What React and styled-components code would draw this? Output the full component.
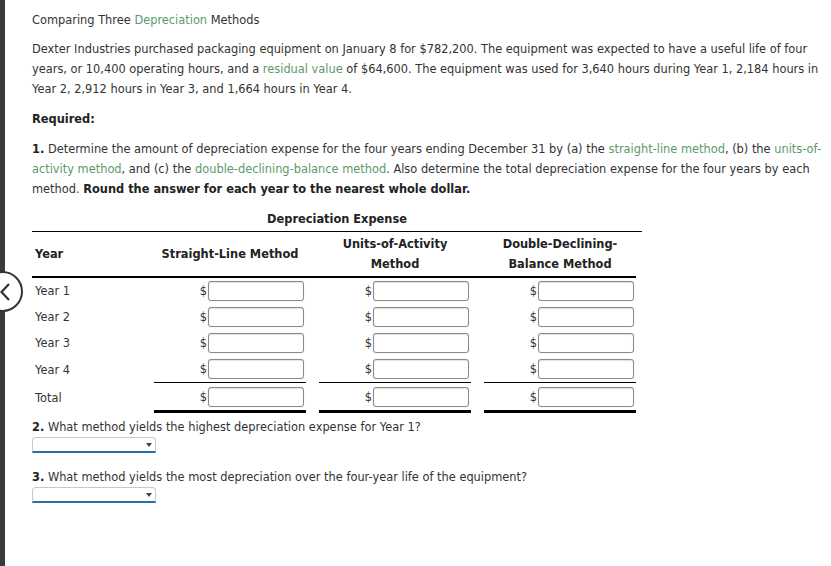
import React from 'react';
import styled, { createGlobalStyle } from 'styled-components';

const GlobalStyle = createGlobalStyle`
  body {
    margin: 0;
    background: #fff;
    font-family: "DejaVu Sans", Verdana, sans-serif;
    font-size: 11.4px;
    color: #333;
  }
`;

const Page = styled.div`
  display: flex;
  min-height: 566px;
  position: relative;
  overflow: hidden;
`;

const SideBar = styled.div`
  width: 5px;
  flex-shrink: 0;
  background: #3b3b3b;
`;

const BackButton = styled.div`
  position: absolute;
  left: -18px;
  top: 271px;
  width: 41px;
  height: 41px;
  border-radius: 50%;
  border: 2px solid #333;
  background: #fff;
  display: flex;
  align-items: center;
  justify-content: center;
  padding-left: 5px;
  box-sizing: border-box;
`;

const Main = styled.div`
  flex: 1;
  padding: 10px 8px 0 27px;
  line-height: 20px;
`;

const Title = styled.div`
  margin-bottom: 9px;
`;

const Para = styled.p`
  margin: 0 0 10px;
`;

const Link = styled.span`
  color: #5a9a6c;
`;

const Strong = styled.b`
  color: #222;
`;

const Table = styled.div`
  width: 610px;
  margin-top: 8px;
`;

const TableTitle = styled.div`
  font-weight: bold;
  color: #222;
  text-align: center;
  border-bottom: 1px solid #000;
  height: 22px;
`;

const Grid = styled.div`
  display: grid;
  grid-template-columns: 109px 152px 152px 152px;
  column-gap: 13px;
  width: 604px;
`;

const HeadRow = styled(Grid)`
  border-bottom: 2px solid #000;
  height: 44px;
  align-items: center;
`;

const HeadCell = styled.div`
  font-weight: bold;
  color: #222;
  text-align: ${(p) => (p.$left ? 'left' : 'center')};
  padding-left: ${(p) => (p.$left ? '3px' : '0')};
`;

const Row = styled(Grid)`
  height: ${(p) => p.$h}px;
  align-items: center;
`;

const YearCell = styled.div`
  padding-left: 3px;
`;

const MoneyCell = styled.div`
  display: flex;
  justify-content: flex-end;
  align-items: center;
  height: 100%;
  padding-right: 2px;
  box-sizing: border-box;
  border-bottom: ${(p) => p.$rule || 'none'};
`;

const Dollar = styled.span`
  color: #333;
  margin-right: 1px;
`;

const Box = styled.input`
  width: 96px;
  height: 20px;
  box-sizing: border-box;
  border: 1px solid #8a8a8a;
  border-radius: 3px;
  box-shadow: inset 0 1px 1px rgba(0, 0, 0, 0.12), 0 0 1px rgba(0, 0, 0, 0.2);
  background: #fff;
  margin: 0;
`;

const Question = styled.div`
  margin-top: 4px;
`;

const Select = styled.div`
  width: 124px;
  height: 16px;
  box-sizing: border-box;
  border: 1px solid #c8c8c8;
  border-bottom: 2px solid #2a6fa5;
  border-radius: 4px 4px 0 0;
  display: flex;
  align-items: center;
  justify-content: flex-end;
  padding-right: 3px;
  margin: 0 0 14px;
`;

const Arrow = styled.span`
  width: 0;
  height: 0;
  border-left: 3px solid transparent;
  border-right: 3px solid transparent;
  border-top: 4px solid #444;
`;

const rows = [
  { label: 'Year 1', h: 26 },
  { label: 'Year 2', h: 26 },
  { label: 'Year 3', h: 26 },
  { label: 'Year 4', h: 27, rule: '1px solid #000' },
  { label: 'Total', h: 30, rule: '3px solid #000' },
];

const App = () => {
  return (
    <>
      <GlobalStyle />
      <Page>
        <SideBar />
        <BackButton>
          <svg width="10" height="18" viewBox="0 0 10 18">
            <path d="M9 1 L1.5 9 L9 17" fill="none" stroke="#333" strokeWidth="2.2" />
          </svg>
        </BackButton>
        <Main>
          <Title>
            Comparing Three <Link>Depreciation</Link> Methods
          </Title>
          <Para>
            Dexter Industries purchased packaging equipment on January 8 for $782,200. The equipment was
            expected to have a useful life of four years, or 10,400 operating hours, and a{' '}
            <Link>residual value</Link> of $64,600. The equipment was used for 3,640 hours during Year 1,
            2,184 hours in Year 2, 2,912 hours in Year 3, and 1,664 hours in Year 4.
          </Para>
          <Para>
            <Strong>Required:</Strong>
          </Para>
          <Para>
            <Strong>1.</Strong> Determine the amount of depreciation expense for the four years ending
            December 31 by (a) the <Link>straight-line method</Link>, (b) the{' '}
            <Link>units-of-activity method</Link>, and (c) the <Link>double-declining-balance method</Link>.
            Also determine the total depreciation expense for the four years by each method.{' '}
            <Strong>Round the answer for each year to the nearest whole dollar.</Strong>
          </Para>

          <Table>
            <TableTitle>Depreciation Expense</TableTitle>
            <HeadRow>
              <HeadCell $left>Year</HeadCell>
              <HeadCell>Straight-Line Method</HeadCell>
              <HeadCell>
                Units-of-Activity
                <br />
                Method
              </HeadCell>
              <HeadCell>
                Double-Declining-
                <br />
                Balance Method
              </HeadCell>
            </HeadRow>
            {rows.map((r) => (
              <Row key={r.label} $h={r.h}>
                <YearCell>{r.label}</YearCell>
                {[0, 1, 2].map((i) => (
                  <MoneyCell key={i} $rule={r.rule}>
                    <Dollar>$</Dollar>
                    <Box type="text" />
                  </MoneyCell>
                ))}
              </Row>
            ))}
          </Table>

          <Question>
            <Strong>2.</Strong> What method yields the highest depreciation expense for Year 1?
          </Question>
          <Select>
            <Arrow />
          </Select>
          <Question>
            <Strong>3.</Strong> What method yields the most depreciation over the four-year life of the
            equipment?
          </Question>
          <Select>
            <Arrow />
          </Select>
        </Main>
      </Page>
    </>
  );
};

export default App;
